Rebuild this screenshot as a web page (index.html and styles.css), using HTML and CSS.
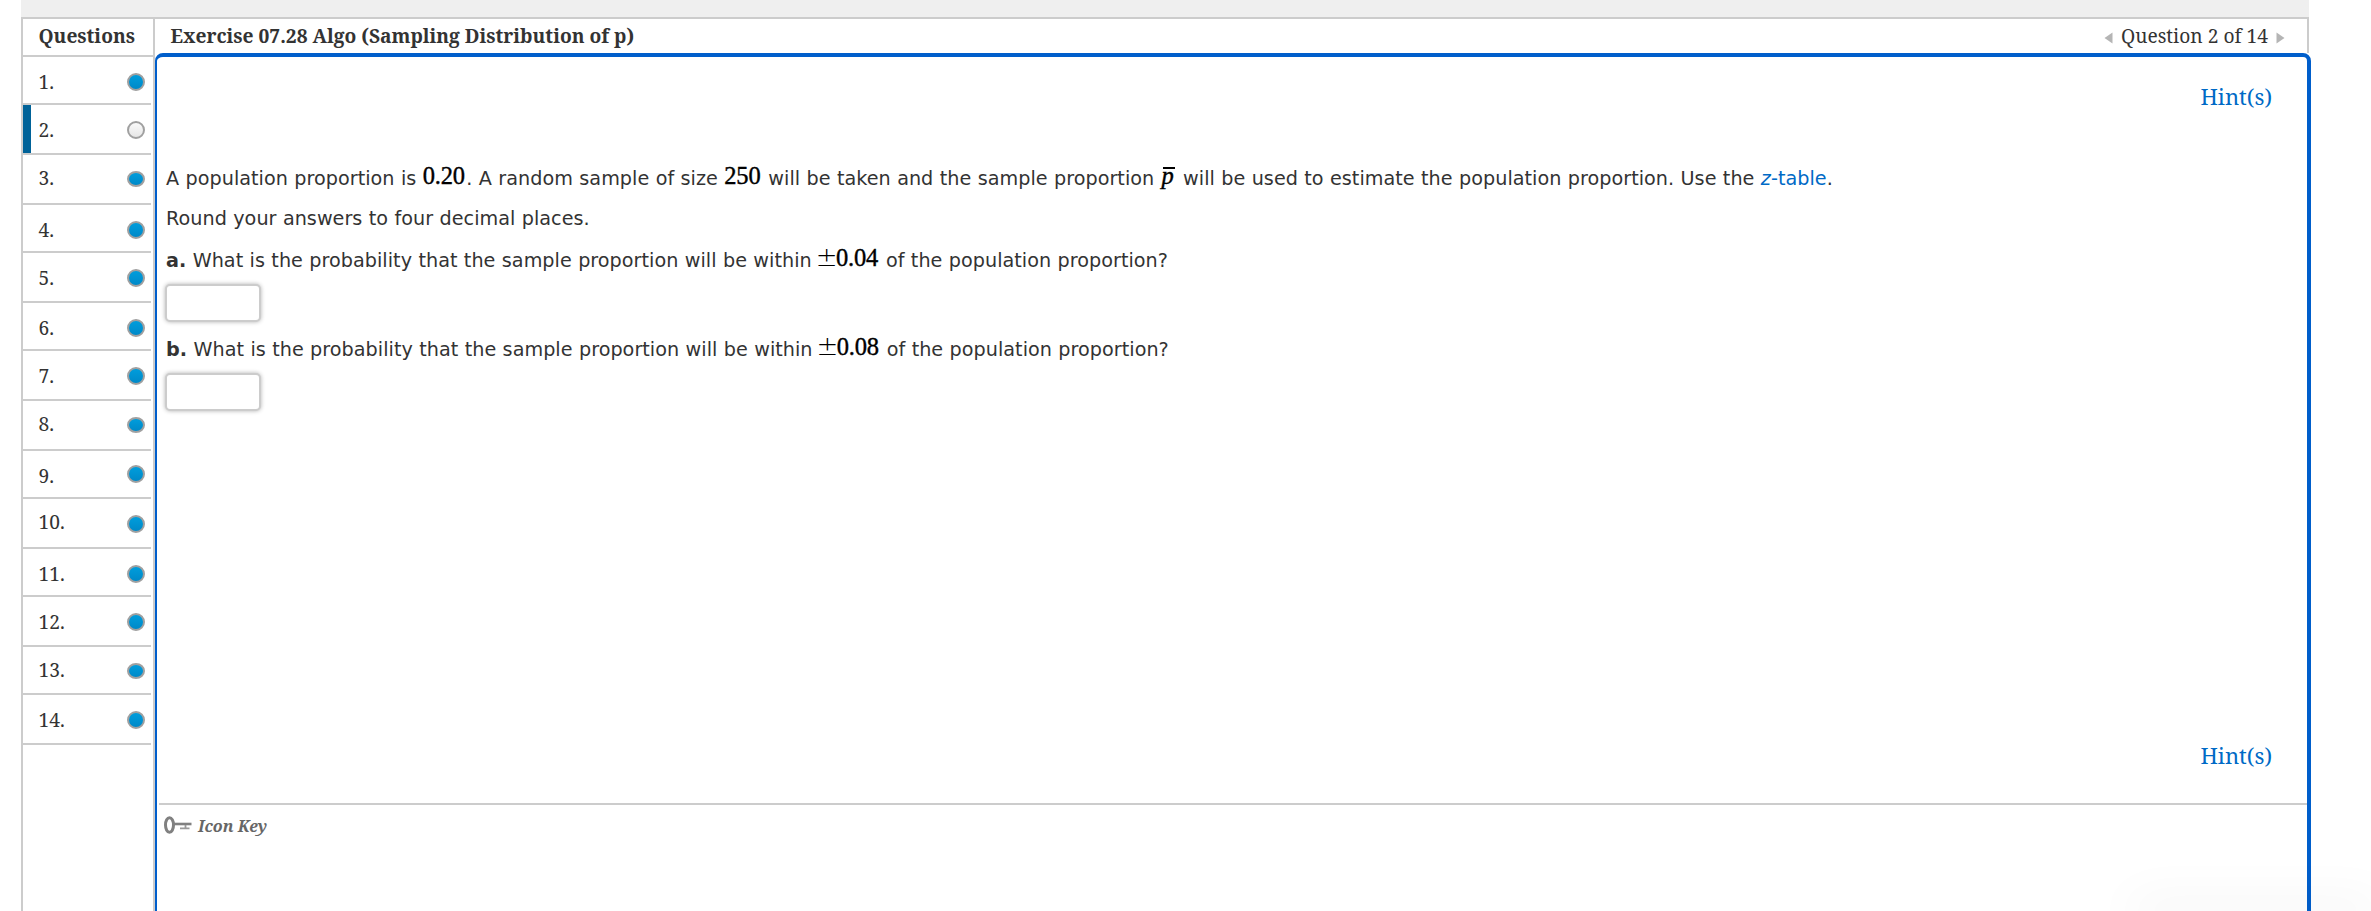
FILE: index.html
```html
<!DOCTYPE html>
<html lang="en">
  <head>
    <title>Exercise 07.28 Algo (Sampling Distribution of p)</title>
    <meta charset="utf-8">
    <link rel="stylesheet" href="styles.css">
  </head>
  <body>

  <div class="topbar"></div>

  <div class="assignment">
    <div class="sidebar">
      <div class="sidebar-title">Questions</div>
      <ul class="questions">
        <li class="short">1.<span class="dot"></span></li>
        <li class="current">2.<span class="dot"></span></li>
        <li class="high">3.<span class="dot flat"></span></li>
        <li class="short">4.<span class="dot"></span></li>
        <li>5.<span class="dot"></span></li>
        <li class="short">6.<span class="dot"></span></li>
        <li>7.<span class="dot"></span></li>
        <li class="high">8.<span class="dot flat"></span></li>
        <li class="short">9.<span class="dot up"></span></li>
        <li class="high">10.<span class="dot"></span></li>
        <li class="short">11.<span class="dot"></span></li>
        <li>12.<span class="dot"></span></li>
        <li class="short high">13.<span class="dot flat"></span></li>
        <li>14.<span class="dot"></span></li>
      </ul>
    </div>

    <div class="main">
      <div class="header">
        <span class="title">Exercise 07.28 Algo (Sampling Distribution of p)</span>
        <span class="pager">
          <svg width="9" height="12" viewBox="0 0 9 12"><path d="M8.5 0.5v11L0.5 6z" fill="#b5b5b5"/></svg>
          <span>Question 2 of 14</span>
          <svg width="9" height="12" viewBox="0 0 9 12"><path d="M0.5 0.5v11L8.5 6z" fill="#b5b5b5"/></svg>
        </span>
      </div>

      <div class="panel">
        <a class="hint">Hint(s)</a>
        <div class="problem">
          <p class="intro">A population proportion is <span class="math">0.20</span>. A random sample of size <span class="math">250</span> will be taken and the sample proportion <i class="math pbar">p</i> will be used to estimate the population proportion. Use the <a><i>z</i>-table</a>.</p>
          <p class="round">Round your answers to four decimal places.</p>
          <p class="part"><b>a.</b> What is the probability that the sample proportion will be within <span class="pm">±</span><span class="math">0.04</span> of the population proportion?</p>
          <input class="answer" type="text">
          <p class="part"><b>b.</b> What is the probability that the sample proportion will be within <span class="pm">±</span><span class="math">0.08</span> of the population proportion?</p>
          <input class="answer" type="text">
        </div>
        <a class="hint bottom">Hint(s)</a>
        <div class="icon-key">
          <svg width="28" height="18" viewBox="0 0 28 18">
            <ellipse cx="5.5" cy="9" rx="4" ry="7.3" fill="none" stroke="#808080" stroke-width="3"/>
            <path d="M10 8h17.5" stroke="#808080" stroke-width="2.6"/>
            <path d="M21.5 9v3M16 12.3h9.5" stroke="#999" stroke-width="1.8"/>
          </svg>
          <span>Icon Key</span>
        </div>
      </div>
    </div>
  </div>

  <div class="corner"></div>

  </body>
</html>
```
FILE: styles.css
```css
* {
  box-sizing: border-box;
}
body {
  margin: 0;
  height: 911px;
  overflow: hidden;
  background: #fff;
  color: #333;
  font-family: "Noto Serif", serif;
  font-size: 19.2px;
}

a {
  color: #006ac6;
}

.topbar {
  width: 2288px;
  height: 17px;
  margin-left: 21px;
  background: #efefef;
}

.assignment {
  display: flex;
  width: 2288px;
  height: 894px;
  margin-left: 21px;
  border-top: 2px solid #ccc;
}

/* question list */
.sidebar {
  width: 134px;
  flex: none;
  border-left: 2px solid #ccc;
  border-right: 2px solid #ccc;
}

.sidebar-title {
  height: 38px;
  padding-left: 15.5px;
  line-height: 34px;
  font-weight: bold;
  border-bottom: 2px solid #ccc;
}

.questions {
  width: 128px;
  margin: 0;
  padding: 0;
  list-style: none;
}

.questions li {
  display: flex;
  justify-content: space-between;
  height: 50px;
  padding: 12px 6px 0 15.5px;
  line-height: 26px;
  border-bottom: 2px solid #ccc;
}
.questions li.short {
  height: 48px;
}
.questions li.high {
  padding-top: 10px;
}
.questions li.current {
  position: relative;
}
.questions li.current::before {
  content: "";
  position: absolute;
  left: 0;
  top: 0;
  width: 8px;
  height: 48px;
  background: #006298;
}

.dot {
  width: 18px;
  height: 18px;
  margin-top: 4px;
  border: 2px solid #a0a0a0;
  border-radius: 50%;
  background: linear-gradient(#009ddc, #0089c8);
}
.dot.up {
  margin-top: 2px;
}
.high .dot {
  margin-top: 6px;
}
.dot.flat {
  height: 16px;
}
.current .dot {
  background: linear-gradient(#fafafa, #e6e6e6);
}

.main {
  flex: 1;
}

.header {
  display: flex;
  justify-content: space-between;
  height: 34px;
  padding: 0 22px 0 15.5px;
  line-height: 34px;
  border-right: 2px solid #ccc;
}

.title {
  font-weight: bold;
}

.pager {
  display: flex;
  align-items: center;
  gap: 8px;
}
.pager svg {
  margin-top: 4px;
}

.panel {
  display: flex;
  flex-direction: column;
  height: 870px;
  margin-right: -2px;
  border: 4px solid #005ecb;
  border-left-width: 2px;
  border-radius: 8px 8px 0 0;
}

.hint {
  height: 30px;
  margin: 24px 35px 0 0;
  line-height: 30px;
  font-size: 22px;
  text-align: right;
}
.hint.bottom {
  margin-top: auto;
}

.problem {
  padding: 53px 0 0 9px;
  font-family: "DejaVu Sans", Verdana, sans-serif;
  letter-spacing: 0.03px;
  word-spacing: 0.25px;
}
.problem p {
  margin: 0;
  height: 30px;
  line-height: 30px;
  white-space: nowrap;
}
.problem .round {
  margin: 10px 0 12px;
}

.math {
  display: inline-block;
  position: relative;
  top: -1px;
  margin-right: 1.5px;
  color: #000;
  font-family: "Liberation Serif", serif;
  font-size: 24.5px;
  line-height: 20px;
  letter-spacing: -0.2px;
  -webkit-text-stroke: 0.4px #000;
}
.pm {
  display: inline-block;
  position: relative;
  top: -1px;
  margin-left: -2.5px;
  color: #000;
  font-size: 26px;
  font-weight: 200;
  line-height: 20px;
  letter-spacing: -1.5px;
}
/* bar over the p */
.pbar {
  margin: 0 3px 0 1px;
}
.pbar::before {
  content: "";
  position: absolute;
  top: 1px;
  left: 1px;
  width: 12px;
  height: 2px;
  background: #000;
}

.answer {
  display: block;
  width: 96px;
  height: 38px;
  margin: 8px 0 13px -1px;
  border: 2px solid #ccc;
  border-radius: 5px;
  box-shadow: 0 0 4px rgba(0, 0, 0, 0.3);
}

.icon-key {
  display: flex;
  gap: 6px;
  height: 116px;
  margin: 33px 0 0 2px;
  padding: 11px 0 0 5px;
  border-top: 2px solid #ccc;
  color: #666;
  font-size: 16px;
  font-style: italic;
  font-weight: bold;
  line-height: 20px;
}

/* soft shade in the bottom right corner */
.corner {
  position: absolute;
  left: 2140px;
  top: 911px;
  width: 231px;
  height: 0;
  box-shadow: 0 0 50px 10px rgba(0, 0, 0, 0.06);
}
```
